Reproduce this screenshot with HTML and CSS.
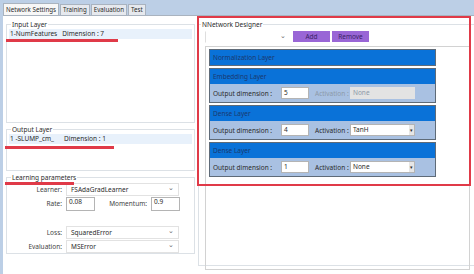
FILE: index.html
```html
<!DOCTYPE html>
<html lang="en">
<head>
    <meta charset="UTF-8">
    <title>Network Settings</title>
    <link rel="stylesheet" href="styles.css">
</head>
<body>
    <div class="tabs">
        <div class="tab active">Network Settings</div>
        <div class="tab">Training</div>
        <div class="tab">Evaluation</div>
        <div class="tab">Test</div>
    </div>
    <div class="panel">
        <div class="left">
            <fieldset class="group input-group">
                <legend>Input Layer</legend>
                <div class="row-item">1-NumFeatures&nbsp;&nbsp; Dimension : 7</div>
            </fieldset>
            <fieldset class="group output-group">
                <legend>Output Layer</legend>
                <div class="row-item">1 -SLUMP_cm_&nbsp;&nbsp;&nbsp;&nbsp;&nbsp; Dimension : 1</div>
            </fieldset>
            <fieldset class="group learn-group">
                <legend>Learning parameters</legend>
                <div class="form-row">
                    <span class="lbl">Learner:</span>
                    <div class="combo wide">FSAdaGradLearner<span class="chev">&#8964;</span></div>
                </div>
                <div class="form-row">
                    <span class="lbl">Rate:</span>
                    <div class="box small">0.08</div>
                    <span class="lbl mom">Momentum:</span>
                    <div class="box small">0.9</div>
                </div>
                <div class="form-row spaced">
                    <span class="lbl">Loss:</span>
                    <div class="combo wide">SquaredError<span class="chev">&#8964;</span></div>
                </div>
                <div class="form-row">
                    <span class="lbl">Evaluation:</span>
                    <div class="combo wide">MSError<span class="chev">&#8964;</span></div>
                </div>
            </fieldset>
        </div>
        <div class="right">
            <fieldset class="group designer">
                <legend>NNetwork Designer</legend>
                <div class="toolbar">
                    <div class="combo layer-pick"><span class="chev">&#8964;</span></div>
                    <div class="btn">Add</div>
                    <div class="btn">Remove</div>
                </div>
                <div class="layers">
                    <div class="card">
                        <div class="card-head">Normalization Layer</div>
                    </div>
                    <div class="card">
                        <div class="card-head">Embedding Layer</div>
                        <div class="card-body">
                            <span class="dim-lbl">Output dimension :</span>
                            <div class="box dim">5</div>
                            <span class="act-lbl off">Activation :</span>
                            <div class="box act off">None</div>
                        </div>
                    </div>
                    <div class="card">
                        <div class="card-head">Dense Layer</div>
                        <div class="card-body">
                            <span class="dim-lbl">Output dimension :</span>
                            <div class="box dim">4</div>
                            <span class="act-lbl">Activation :</span>
                            <div class="box act">TanH<span class="drop">&#9662;</span></div>
                        </div>
                    </div>
                    <div class="card">
                        <div class="card-head">Dense Layer</div>
                        <div class="card-body">
                            <span class="dim-lbl">Output dimension :</span>
                            <div class="box dim">1</div>
                            <span class="act-lbl">Activation :</span>
                            <div class="box act">None<span class="drop">&#9662;</span></div>
                        </div>
                    </div>
                </div>
            </fieldset>
        </div>
    </div>

    <!-- annotations drawn over the screenshot -->
    <div class="mark underline-1"></div>
    <div class="mark underline-2"></div>
    <div class="mark underline-3"></div>
    <div class="mark frame"></div>
</body>
</html>
```

FILE: styles.css
```css
body {
    margin: 0;
    width: 474px;
    height: 274px;
    overflow: hidden;
    position: relative;
    background-color: #bccfe6;
    font-family: "Noto Sans", "Open Sans", sans-serif;
    font-size: 6.5px;
    color: #2b2b2b;
}
.tabs {
    display: flex;
    align-items: flex-end;
    height: 15px;
    padding-left: 3px;
    gap: 1px;
}
.tab {
    height: 10px;
    line-height: 10px;
    padding: 0 2px;
    font-size: 6.2px;
    background: #e6e9ee;
    border: 1px solid #a9b3bf;
    border-bottom: none;
}
.tab.active {
    height: 11px;
    line-height: 11px;
    background: #f7f7f7;
}
.panel {
    display: flex;
    margin-left: 3px;
    height: 259px;
    background: #fff;
    border-top: 1px solid #a9b3bf;
}
.left {
    width: 193px;
    display: flex;
    flex-direction: column;
}
.group {
    margin: 0;
    padding: 0 2px;
    border: 1px solid #dce1e6;
    min-width: 0;
}
.group legend {
    padding: 0 1px;
    line-height: 9px;
    margin-left: 2px;
}
.input-group {
    margin: 4px 0 0 3px;
    width: 183px;
    height: 101px;
}
.output-group {
    margin: 2px 0 0 3px;
    width: 183px;
    height: 44px;
}
.learn-group {
    margin: 2px 0 0 3px;
    width: 183px;
    height: 79px;
}
.row-item {
    height: 10px;
    line-height: 10px;
    padding-left: 1px;
    background: #e8f1fb;
}
.form-row {
    display: flex;
    align-items: center;
    margin-top: 1px;
    height: 13px;
}
.form-row.spaced {
    margin-top: 16px;
}
.lbl {
    width: 53px;
    text-align: right;
    padding-right: 4px;
    color: #444;
}
.lbl.mom {
    width: 52px;
}
.combo {
    position: relative;
    height: 11px;
    line-height: 11px;
    padding-left: 4px;
    background: #fff;
    border: 1px solid #e2e2e2;
}
.combo.wide {
    width: 107px;
}
.chev {
    position: absolute;
    right: 4px;
    top: -2px;
    font-size: 7px;
    color: #666;
}
.box {
    height: 10px;
    line-height: 10px;
    padding-left: 2px;
    background: #fff;
    border: 1px solid #b4b4b4;
}
.box.small {
    width: 25px;
    line-height: 8px;
    height: 12px;
}
.right {
    flex: 1;
}
.designer {
    margin: 4px 0 0 3px;
    width: 265px;
    height: 244px;
    padding: 0 5px 0 6px;
}
.designer legend {
    margin-left: -4px;
}
.toolbar {
    display: flex;
    gap: 2px;
    margin-top: 2px;
    height: 11px;
}
.layer-pick {
    width: 80px;
    height: 10px;
    border-color: #fff;
    border-left-color: #dedede;
}
.btn {
    width: 37px;
    height: 11px;
    line-height: 11px;
    text-align: center;
    background: #9966d6;
    color: #3a2266;
}
.layers {
    margin-top: 4px;
    height: 218px;
    border: 1px solid #d2d2d2;
    padding: 2px 3px;
    display: flex;
    flex-direction: column;
    gap: 2px;
}
.card {
    width: 225px;
    border: 1px solid #5f6b78;
    background: #a9c1e2;
}
.card-head {
    height: 15px;
    line-height: 15px;
    padding-left: 3px;
    background: #0a72d8;
    color: #1a3970;
}
.card-body {
    display: flex;
    align-items: center;
    height: 18px;
    padding-left: 3px;
}
.dim-lbl {
    width: 68px;
}
.dim {
    width: 24px;
}
.act-lbl {
    width: 35px;
    margin-left: 6px;
}
.act {
    position: relative;
    width: 61px;
}
.off {
    color: #8c99a8;
}
.box.off {
    background: #e3e3e3;
    border-color: #e3e3e3;
}
.drop {
    position: absolute;
    right: 0;
    top: 0;
    width: 5px;
    height: 10px;
    background: #e6e6e6;
    font-size: 5px;
    text-align: center;
}
.mark {
    position: absolute;
    background: #e03a48;
}
.underline-1 {
    left: 6px;
    top: 39px;
    width: 112px;
    height: 3px;
}
.underline-2 {
    left: 5px;
    top: 146px;
    width: 109px;
    height: 3px;
}
.underline-3 {
    left: 5px;
    top: 182px;
    width: 69px;
    height: 3px;
}
.frame {
    left: 197px;
    top: 16px;
    width: 270px;
    height: 166px;
    background: none;
    border: 2px solid #e03a48;
}
```
